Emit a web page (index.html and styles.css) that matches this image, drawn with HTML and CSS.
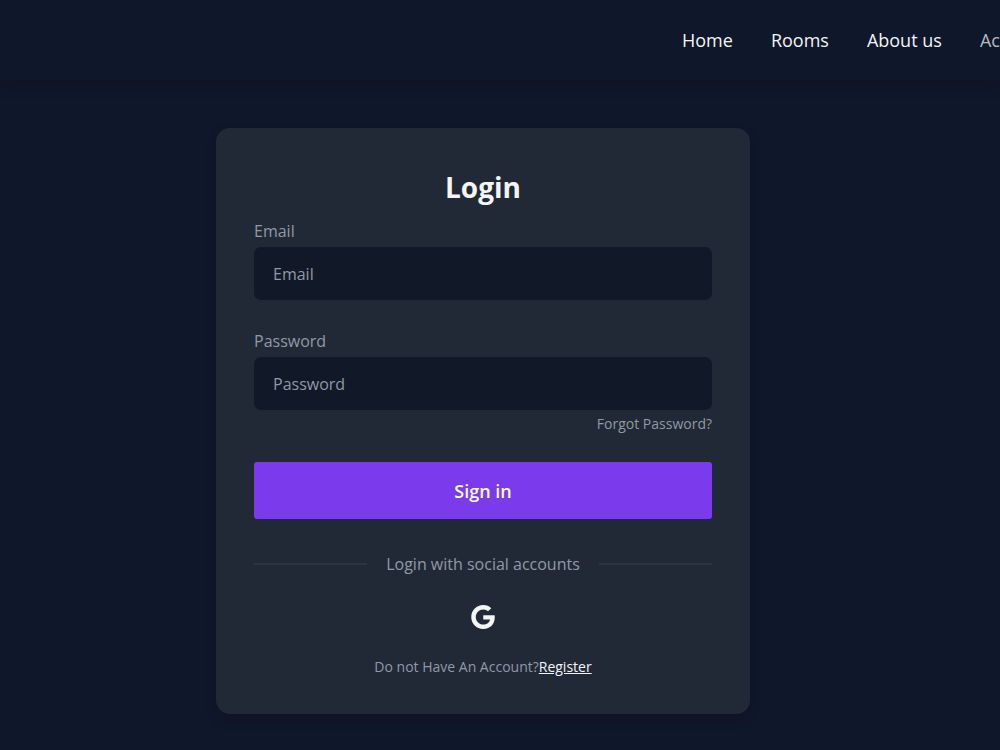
FILE: index.html
```html
<!DOCTYPE html>
<html lang="en">
<head>
    <meta charset="UTF-8">
    <meta name="viewport" content="width=device-width, initial-scale=1.0">
    <title>Login</title>
    <link rel="stylesheet" href="styles.css">
</head>
<body>

    <header class="header">
        <nav class="nav">
            <a href="#">Home</a>
            <a href="#">Rooms</a>
            <a href="#">About us</a>
            <a href="#" class="muted">Account</a>
        </nav>
    </header>

    <main class="main">
        <section class="card">
            <h1 class="title">Login</h1>

            <form class="form">
                <div class="field">
                    <label for="email">Email</label>
                    <input type="email" id="email" name="email" placeholder="Email">
                </div>
                <div class="field">
                    <label for="password">Password</label>
                    <input type="password" id="password" name="password" placeholder="Password">
                    <a href="#" class="forgot">Forgot Password?</a>
                </div>
                <button type="submit" class="sign-in">Sign in</button>
            </form>

            <div class="divider">Login with social accounts</div>

            <button type="button" class="google" aria-label="Log in with Google">
                <svg viewBox="0 0 32 32" width="24" height="24" fill="currentColor">
                    <path d="M16.318 13.714v5.484h9.078c-0.37 2.354-2.745 6.901-9.078 6.901-5.458 0-9.917-4.521-9.917-10.099s4.458-10.099 9.917-10.099c3.109 0 5.193 1.318 6.38 2.464l4.339-4.182c-2.786-2.599-6.396-4.182-10.719-4.182-8.844 0-16 7.151-16 16s7.156 16 16 16c9.234 0 15.365-6.49 15.365-15.635 0-1.052-0.115-1.854-0.255-2.651z"/>
                </svg>
            </button>

            <p class="signup">Do not Have An Account?<a href="#">Register</a></p>
        </section>
    </main>

</body>
</html>
```
FILE: styles.css
```css
* {
    box-sizing: border-box;
}

body {
    margin: 0;
    min-height: 100vh;
    background-color: #0f172a;
    color: #f3f4f6;
    font-family: "Segoe UI", "Open Sans", "Noto Sans", sans-serif;
    font-size: 16px;
    line-height: 24px;
    overflow-x: hidden;
}

a {
    color: inherit;
    text-decoration: none;
}

.header {
    padding: 26px 0;
    overflow: hidden;
    box-shadow: 0 6px 8px rgba(17, 18, 36, 0.7);
}

.nav {
    display: flex;
    gap: 38px;
    margin-left: 68.2%;
    font-size: 18px;
    font-weight: 500;
    line-height: 28px;
    white-space: nowrap;
}

.nav .muted {
    color: #b6bac3;
}

.main {
    display: flex;
    justify-content: center;
    padding: 48px 34px 36px 0;
}

.card {
    width: 100%;
    max-width: 534px;
    padding: 38px;
    border-radius: 14px;
    background-color: #212937;
    box-shadow: 0 6px 8px rgba(17, 18, 36, 0.7);
}

.title {
    margin: 0 0 11px;
    font-size: 28px;
    font-weight: 700;
    line-height: 42px;
    text-align: center;
}

.form {
    display: flex;
    flex-direction: column;
    gap: 29px;
}

.field {
    display: flex;
    flex-direction: column;
    color: #9099a6;
}

.field label {
    margin-bottom: 4px;
}

.field input {
    width: 100%;
    height: 53px;
    padding: 0 19px;
    border: 0;
    border-radius: 7px;
    background-color: #111827;
    color: #f3f4f6;
    font: inherit;
}

.field input::placeholder {
    color: #9099a6;
    opacity: 1;
}

.forgot {
    align-self: flex-end;
    margin-top: 5px;
    font-size: 14px;
    line-height: 18px;
}

.sign-in {
    height: 57px;
    border: 0;
    border-radius: 3px;
    background-color: #7c3aed;
    color: #f9fafb;
    font-family: inherit;
    font-size: 18px;
    font-weight: 600;
    cursor: pointer;
}

.divider {
    display: flex;
    align-items: center;
    gap: 19px;
    margin-top: 33px;
    color: #9099a6;
}

.divider::before,
.divider::after {
    content: "";
    flex: 1;
    height: 2px;
    background-color: #2b3442;
}

.google {
    display: flex;
    margin: 27px auto 0;
    padding: 2px;
    border: 0;
    background: none;
    color: #f3f4f6;
    cursor: pointer;
}

.signup {
    margin: 27px 0 0;
    color: #9099a6;
    font-size: 14px;
    line-height: 18px;
    text-align: center;
}

.signup a {
    color: #f3f4f6;
    text-decoration: underline;
}
```
